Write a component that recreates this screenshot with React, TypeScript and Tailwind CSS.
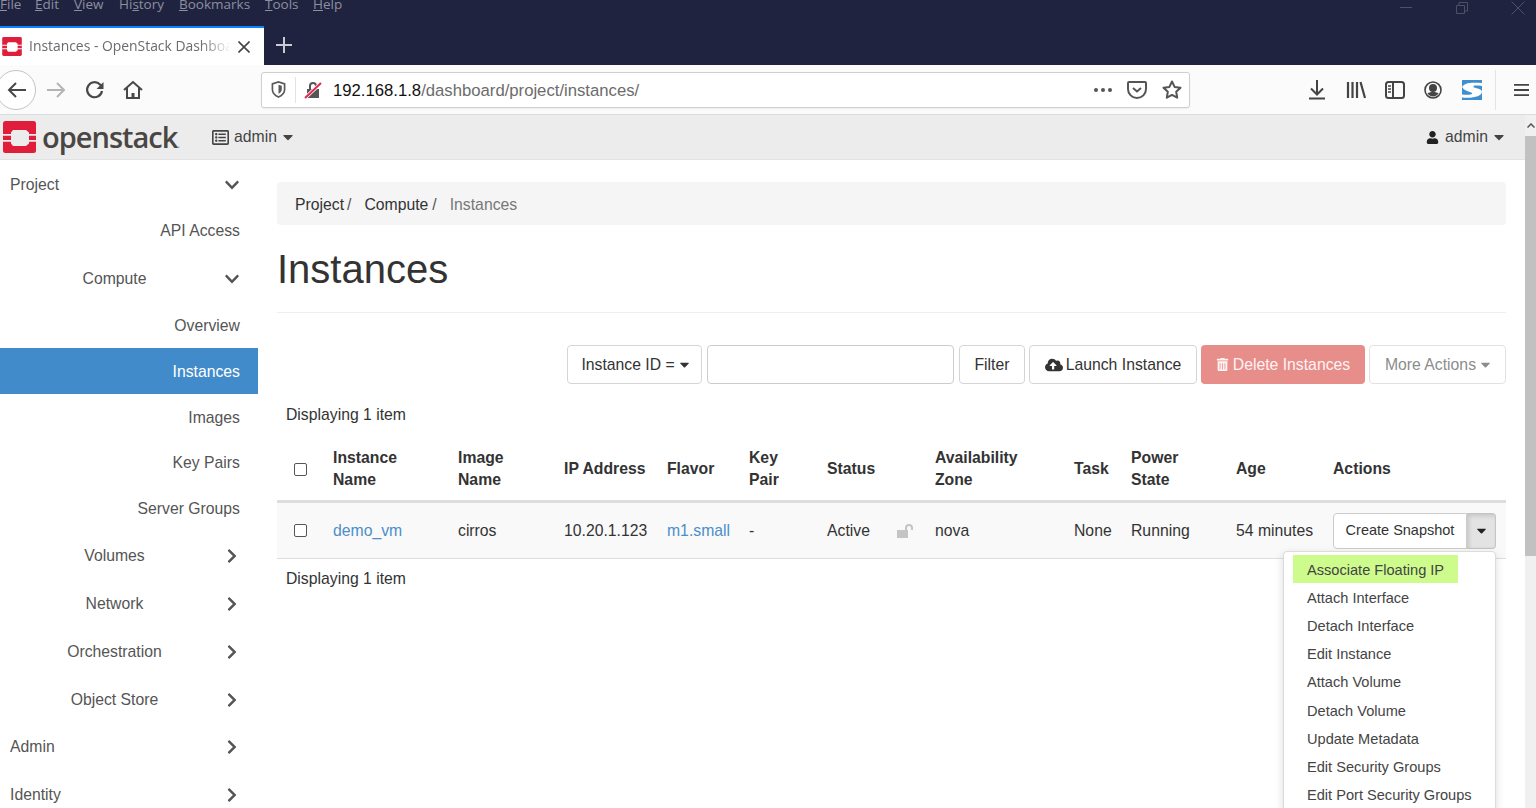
import { FaCaretDown, FaChevronDown, FaChevronRight, FaCloudUploadAlt, FaRegListAlt, FaTrashAlt, FaUser } from 'react-icons/fa';

const sans = "font-['Liberation_Sans',Arial,sans-serif]";

const menus = [
  { pre: '', key: 'F', post: 'ile', cls: 'w-[35px]' },
  { pre: '', key: 'E', post: 'dit', cls: 'w-[39px]' },
  { pre: '', key: 'V', post: 'iew', cls: 'w-[45px]' },
  { pre: 'Hi', key: 's', post: 'tory', cls: 'w-[60px]' },
  { pre: '', key: 'B', post: 'ookmarks', cls: 'w-[86px]' },
  { pre: '', key: 'T', post: 'ools', cls: 'w-[48px]' },
  { pre: '', key: 'H', post: 'elp', cls: 'w-[40px]' },
];

const sideItems = [
  { label: 'Project', kind: 'top', cls: 'h-[47px]', open: true },
  { label: 'API Access', kind: 'leaf', cls: 'h-[46px]' },
  { label: 'Compute', kind: 'group', cls: 'h-[49px]', open: true },
  { label: 'Overview', kind: 'leaf', cls: 'h-[46px]' },
  { label: 'Instances', kind: 'active', cls: 'h-[46px]' },
  { label: 'Images', kind: 'leaf', cls: 'h-[45px]' },
  { label: 'Key Pairs', kind: 'leaf', cls: 'h-[46px]' },
  { label: 'Server Groups', kind: 'leaf', cls: 'h-[46px]' },
  { label: 'Volumes', kind: 'group', cls: 'h-[48px]' },
  { label: 'Network', kind: 'group', cls: 'h-[48px]' },
  { label: 'Orchestration', kind: 'group', cls: 'h-[48px]' },
  { label: 'Object Store', kind: 'group', cls: 'h-[47px]' },
  { label: 'Admin', kind: 'top', cls: 'h-[48px]' },
  { label: 'Identity', kind: 'top', cls: 'h-[48px]' },
];

const actions = [
  'Associate Floating IP',
  'Attach Interface',
  'Detach Interface',
  'Edit Instance',
  'Attach Volume',
  'Detach Volume',
  'Update Metadata',
  'Edit Security Groups',
  'Edit Port Security Groups',
];

const gridCols = 'grid grid-cols-[56px_125px_106px_103px_82px_78px_108px_139px_57px_105px_97px_173px] items-center';

function OsLogo({ className, hole }: { className: string; hole: string }) {
  return (
    <svg viewBox="0 0 33 32" className={className}>
      <rect width="33" height="32" rx="2.500" fill="#e11d3c" />
      <path fill={hole} d="M10 9h13l3 2.500v11l-3 2.500H10l-2-2.500v-11z" />
      <path fill={hole} d="M0 13h8v1.800H0zM0 19h8v1.800H0zM25 13h8v1.800h-8zM25 19h8v1.800h-8z" />
    </svg>
  );
}

function SideRow({ label, kind, cls, open }: { label: string; kind: string; cls: string; open?: boolean }) {
  const chevron = open ? <FaChevronDown className="text-[16px] text-[#555]" /> : <FaChevronRight className="text-[16px] text-[#555]" />;
  if (kind === 'leaf' || kind === 'active') {
    return (
      <div className={`${cls} flex items-center justify-end pr-[18px] pt-[2px] ${kind === 'active' ? 'bg-[#428bca] text-white' : 'text-[#555]'}`}>
        {label}
      </div>
    );
  }
  return (
    <div className={`${cls} flex items-center pt-[2px] text-[#555] ${kind === 'top' ? 'pl-[10px]' : ''}`}>
      <span className={kind === 'group' ? 'w-[224px] pl-[5px] text-center' : 'flex-1'}>{label}</span>
      <span className="w-[34px]">{chevron}</span>
    </div>
  );
}

export default function App() {
  return (
    <div className={`${sans} relative h-[808px] w-[1536px] overflow-hidden bg-white text-[15.750px] text-[#333]`}>
      {/* title bar */}
      <div className="relative h-[65px] bg-[#20233f]">
        <div className="flex h-[8px] pl-0 font-['Open_Sans',sans-serif] text-[13.500px] leading-[12px] text-[#8d8f9f]">
          {menus.map((m) => (
            <div key={m.key} className={`${m.cls} -mt-[2px]`}>
              {m.pre}
              <span className="underline">{m.key}</span>
              {m.post}
            </div>
          ))}
        </div>
        <div className="absolute right-[124px] top-[7px] h-px w-[12px] bg-[#4e5068]" />
        <svg viewBox="0 0 12 12" className="absolute left-[1456px] top-[2px] h-[12px] w-[12px]" fill="none" stroke="#4e5068">
          <path d="M.5 3.500h8v8h-8zM3 3.500V.5h8.500V9H8.500" />
        </svg>
        <svg viewBox="0 0 14 14" className="absolute left-[1511px] top-[1px] h-[14px] w-[14px]" fill="none" stroke="#4e5068">
          <path d="M.5.5l13 13M13.500.5l-13 13" />
        </svg>

        <div className="absolute bottom-0 left-0 flex h-[39px] w-[264px] items-center border-t-2 border-[#0a84ff] bg-white">
          <OsLogo className="ml-[2px] h-[19px] w-[20px]" hole="#ffffff" />
          <span className="ml-[7px] w-[202px] overflow-hidden whitespace-nowrap font-['Open_Sans',sans-serif] text-[13.900px] text-[#6a6a70] [mask-image:linear-gradient(to_right,black_85%,transparent)]">
            Instances - OpenStack Dashboard
          </span>
          <svg viewBox="0 0 12 12" className="ml-[7px] h-[12px] w-[12px]" fill="none" stroke="#444" strokeWidth="1.600">
            <path d="M.5.5l11 11M11.500.5l-11 11" />
          </svg>
        </div>
        <svg viewBox="0 0 16 16" className="absolute left-[276px] top-[37px] h-[16px] w-[16px]" fill="none" stroke="#c9cad2" strokeWidth="2">
          <path d="M8 0v16M0 8h16" />
        </svg>
      </div>

      {/* browser toolbar */}
      <div className="relative flex h-[50px] items-center border-b border-[#dcdcdc] bg-[#fbfbfb]">
        <div className="-ml-[4px] flex h-[40px] w-[40px] items-center justify-center rounded-full border border-[#c4c4c4] bg-white pl-[2px]">
          <svg viewBox="0 0 20 20" className="h-[20px] w-[20px]" fill="none" stroke="#484848" strokeWidth="2">
            <path d="M19 10H2M9 3l-7 7 7 7" />
          </svg>
        </div>
        <svg viewBox="0 0 20 20" className="ml-[10px] h-[20px] w-[20px]" fill="none" stroke="#b4b4b4" strokeWidth="2">
          <path d="M1 10h17M11 3l7 7-7 7" />
        </svg>
        <svg viewBox="0 0 20 20" className="ml-[19px] h-[20px] w-[20px]" fill="none" stroke="#484848" strokeWidth="2.200">
          <path d="M17 11a7.500 7.500 0 1 1-2-6.500L17.500 7" />
          <path fill="#484848" stroke="none" d="M18.500 2v7h-7z" />
        </svg>
        <svg viewBox="0 0 20 20" className="ml-[18px] h-[20px] w-[20px]" fill="none" stroke="#484848" strokeWidth="2">
          <path d="M1 10l9-8 9 8M4 8v10h12V8" />
          <path fill="#484848" stroke="none" d="M8.500 13h3v5h-3z" />
        </svg>

        <div className="ml-[118px] flex h-[36px] w-[929px] items-center rounded-[3px] border border-[#cfcfcf] bg-white shadow-[0_1px_2px_rgba(0,0,0,0.06)]">
          <svg viewBox="0 0 16 18" className="ml-[9px] h-[17px] w-[15px]" fill="none" stroke="#5a5a5a" strokeWidth="1.800">
            <path d="M1.500 3L8 1l6.500 2v6c0 4-3 6.500-6.500 8-3.500-1.500-6.500-4-6.500-8z" />
            <path fill="#5a5a5a" stroke="none" d="M8 4l3.500 1v4c0 2-1.500 3.500-3.500 4.500z" />
          </svg>
          <div className="ml-[9px] h-[26px] w-px bg-[#e3e3e3]" />
          <svg viewBox="0 0 18 18" className="ml-[8px] h-[18px] w-[18px]">
            <path fill="#555" d="M3 8h12v9H3zM5 8V5a4 4 0 0 1 8 0v3h-2V5a2 2 0 0 0-4 0v3z" />
            <path stroke="#fff" strokeWidth="3.500" d="M1 17L17 2" />
            <path stroke="#e22850" strokeWidth="2" d="M1 17L17 2" />
          </svg>
          <span className="ml-[11px] flex-1 whitespace-nowrap pt-[2px] text-[16.700px] text-[#111]">
            192.168.1.8<span className="text-[#6c6c6c]">/dashboard/project/instances/</span>
          </span>
          <div className="flex gap-[3px]">
            <span className="h-[4px] w-[4px] rounded-full bg-[#555]" />
            <span className="h-[4px] w-[4px] rounded-full bg-[#555]" />
            <span className="h-[4px] w-[4px] rounded-full bg-[#555]" />
          </div>
          <svg viewBox="0 0 20 18" className="ml-[15px] h-[18px] w-[20px]" fill="none" stroke="#555" strokeWidth="2">
            <path d="M2 1h16a1 1 0 0 1 1 1v6a9 9 0 0 1-18 0V2a1 1 0 0 1 1-1zM6 7l4 3.500L14 7" />
          </svg>
          <svg viewBox="0 0 20 20" className="ml-[15px] mr-[7px] h-[20px] w-[20px]" fill="none" stroke="#555" strokeWidth="2" strokeLinejoin="round">
            <path d="M10 1.500l2.600 5.400 5.900.8-4.300 4.100 1 5.900-5.200-2.800-5.200 2.800 1-5.900L1.500 7.700l5.900-.8z" />
          </svg>
        </div>

        <svg viewBox="0 0 18 20" className="ml-[118px] h-[20px] w-[18px]" fill="none" stroke="#444" strokeWidth="2">
          <path d="M9 0v14M3 8.500L9 14.500l6-6M1 18.500h16" />
        </svg>
        <svg viewBox="0 0 20 18" className="ml-[20px] h-[18px] w-[20px]" fill="none" stroke="#444" strokeWidth="2.200">
          <path d="M2 1v16M6.500 1v16M11 1v16M14.500 1l4.500 16" />
        </svg>
        <svg viewBox="0 0 20 18" className="ml-[19px] h-[18px] w-[20px]" fill="none" stroke="#444" strokeWidth="2">
          <rect x="1" y="1" width="18" height="16" rx="2.500" />
          <path d="M8 1v16" />
          <path stroke="#444" strokeWidth="1.500" d="M3 5h3M3 8h3M3 11h3" />
        </svg>
        <svg viewBox="0 0 18 18" className="ml-[19px] h-[18px] w-[18px]" fill="none" stroke="#444" strokeWidth="1.600">
          <circle cx="9" cy="9" r="8" />
          <circle cx="9" cy="7" r="3.200" fill="#444" />
          <path fill="#444" stroke="none" d="M3.500 12.500c2-2 9-2 11 0-1.500 2-3.500 3-5.500 3s-4-1-5.500-3z" />
        </svg>
        <div className="relative ml-[20px] h-[20px] w-[20px] bg-[#3d8fd0]">
          <svg viewBox="0 0 20 20" className="h-[20px] w-[20px]" fill="#fff">
            <path d="M0 7c2-4 8-5 20-4v3c-7-1-10-.5-8 1.500 3 1 8 1.500 8 4 0 5-9 7-20 6v-3c5 .5 11 .5 10-1.500C8 11.500 2 11 0 7z" />
          </svg>
        </div>
        <div className="ml-[13px] h-[40px] w-px bg-[#e4e4e4]" />
        <svg viewBox="0 0 16 14" className="ml-[18px] h-[14px] w-[15px]" fill="none" stroke="#444" strokeWidth="2">
          <path d="M0 1.500h16M0 7h16M0 12.500h16" />
        </svg>
      </div>

      {/* openstack header */}
      <div className="flex h-[45px] items-center border-b border-[#e2e2e2] bg-[#ececec] pr-[29px] text-[#444]">
        <OsLogo className="ml-[3px] h-[32px] w-[33px]" hole="#ececec" />
        <span className="-mt-[2px] ml-[6px] w-[139px] whitespace-nowrap font-['Open_Sans',sans-serif] text-[29px] font-semibold leading-none tracking-[-1px] text-[#4a4644]">
          openstack<span className="text-[10px] text-[#999]">.</span>
        </span>
        <FaRegListAlt className="ml-[31px] text-[17px] text-[#444]" />
        <span className="ml-[5px]">admin</span>
        <FaCaretDown className="ml-[3px] text-[16px]" />
        <div className="flex-1" />
        <FaUser className="text-[13px] text-[#222]" />
        <span className="ml-[6px]">admin</span>
        <FaCaretDown className="ml-[3px] text-[16px]" />
      </div>

      <div className="flex">
        {/* sidebar */}
        <div className="w-[258px] shrink-0">
          {sideItems.map((it) => (
            <SideRow key={it.label} {...it} />
          ))}
        </div>

        {/* main */}
        <div className="relative ml-[19px] w-[1229px] pt-[22px]">
          <div className="flex h-[43px] items-center rounded-[4px] bg-[#f5f5f5] pl-[18px] pt-[2px]">
            <span>Project</span>
            <span className="ml-[3px] text-[#555]">/</span>
            <span className="ml-[13px]">Compute</span>
            <span className="ml-[4px] text-[#555]">/</span>
            <span className="ml-[13px] text-[#777]">Instances</span>
          </div>
          <h1 className="mt-[21px] h-[66px] text-[40px] leading-[46px] text-[#333]">Instances</h1>
          <div className="h-[22px] border-t border-[#eeeeee]" />

          <div className="mt-[11px] flex h-[39px] justify-end">
            <div className="flex w-[135px] items-center justify-center rounded-[4px] border border-[#d5d5d5] bg-white pl-[4px]">
              Instance ID =<FaCaretDown className="ml-[2px] text-[15px]" />
            </div>
            <div className="ml-[5px] w-[247px] rounded-[4px] border border-[#cccccc] bg-white" />
            <div className="ml-[5px] flex w-[66px] items-center justify-center rounded-[4px] border border-[#d5d5d5] bg-white">Filter</div>
            <div className="ml-[4px] flex w-[168px] items-center justify-center rounded-[4px] border border-[#d5d5d5] bg-white">
              <FaCloudUploadAlt className="mr-[3px] text-[18px]" />
              Launch Instance
            </div>
            <div className="ml-[4px] flex w-[164px] items-center justify-center rounded-[4px] bg-[#e78e8b] text-[#fdf3f3]">
              <FaTrashAlt className="mr-[4px] text-[13px]" />
              Delete Instances
            </div>
            <div className="ml-[4px] flex w-[137px] items-center justify-center rounded-[4px] border border-[#e2e2e2] bg-white pl-[3px] text-[#8c8c8c]">
              More Actions<FaCaretDown className="ml-[2px] text-[15px]" />
            </div>
          </div>

          <div className="mt-[20px] pl-[9px] leading-[22px]">Displaying 1 item</div>

          <div className={`${gridCols} mt-[10px] h-[67px] border-b-[3px] border-[#dddddd] pt-[2px] font-bold leading-[22px]`}>
            <span className="pl-[17px]">
              <span className="block h-[13px] w-[13px] rounded-[2px] border-[1.500px] border-[#555] bg-white" />
            </span>
            <span>Instance<br />Name</span>
            <span>Image<br />Name</span>
            <span>IP Address</span>
            <span>Flavor</span>
            <span>Key<br />Pair</span>
            <span>Status</span>
            <span>Availability<br />Zone</span>
            <span>Task</span>
            <span>Power<br />State</span>
            <span>Age</span>
            <span>Actions</span>
          </div>

          <div className={`${gridCols} h-[56px] border-b border-[#dddddd] bg-[#f9f9f9]`}>
            <span className="pl-[17px]">
              <span className="block h-[13px] w-[13px] rounded-[2px] border-[1.500px] border-[#555] bg-white" />
            </span>
            <span className="text-[#4a8fcb]">demo_vm</span>
            <span>cirros</span>
            <span>10.20.1.123</span>
            <span className="text-[#4a8fcb]">m1.small</span>
            <span>-</span>
            <span className="flex items-center">
              Active
              <svg viewBox="0 0 16 14" className="ml-[27px] h-[14px] w-[16px]">
                <path fill="#c4c4c4" d="M0 6h11v8H0z" />
                <path fill="none" stroke="#c4c4c4" strokeWidth="2" d="M9 6V4a3 3 0 0 1 6 0v2" />
              </svg>
            </span>
            <span>nova</span>
            <span>None</span>
            <span>Running</span>
            <span>54 minutes</span>
            <div className="flex h-[36px] w-[163px] text-[14.500px]">
              <div className="flex w-[134px] items-center justify-center rounded-l-[4px] border border-[#cccccc] bg-white">Create Snapshot</div>
              <div className="flex w-[29px] items-center justify-center rounded-r-[4px] border border-l-0 border-[#c4c4c4] bg-[#e3e3e3] shadow-[inset_2px_2px_4px_rgba(0,0,0,0.13)]">
                <FaCaretDown className="text-[15px] text-[#222]" />
              </div>
            </div>
          </div>

          <div className="mt-[9px] pl-[9px] leading-[22px]">Displaying 1 item</div>

          <div className="absolute left-[1006px] top-[391px] h-[270px] w-[213px] rounded-[4px] border border-[#dcdcdc] bg-white py-[3px] text-[14.600px] text-[#444] shadow-[0_3px_8px_rgba(0,0,0,0.15)]">
            {actions.map((a, i) => (
              <div key={a} className={`flex h-[28.200px] items-center pl-[23px] pt-[3px] ${i === 0 ? 'ml-[9px] mr-[37px] !pl-[14px] bg-[#cdfc8d]' : ''}`}>
                {a}
              </div>
            ))}
          </div>
        </div>
      </div>

      {/* page scrollbar */}
      <div className="absolute left-[1525px] top-[115px] flex h-[693px] w-[11px] flex-col items-center bg-[#f0f0f0]">
        <svg viewBox="0 0 8 5" className="mt-[8px] h-[5px] w-[8px]" fill="none" stroke="#555" strokeWidth="1.500">
          <path d="M.5 4.500L4 1l3.500 3.500" />
        </svg>
        <div className="mt-[8px] h-[420px] w-full bg-[#c1c1c1]" />
      </div>
    </div>
  );
}
